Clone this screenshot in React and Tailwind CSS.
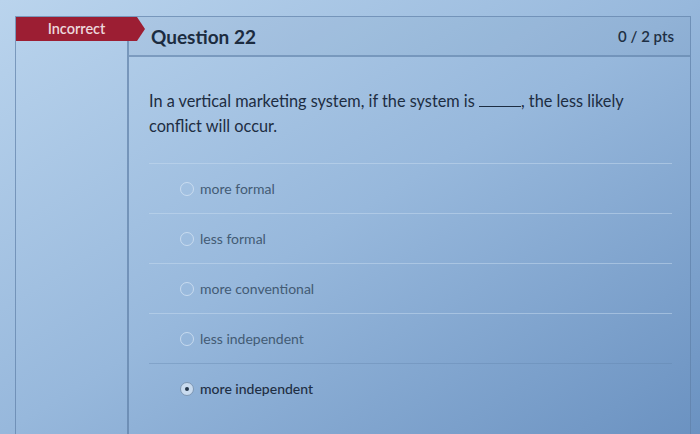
import React from 'react';

const options = [
  { label: 'more formal', selected: false },
  { label: 'less formal', selected: false },
  { label: 'more conventional', selected: false },
  { label: 'less independent', selected: false },
  { label: 'more independent', selected: true },
];

const Radio = ({ selected }) => (
  <span
    className={
      'flex h-[14px] w-[14px] shrink-0 items-center justify-center rounded-full border ' +
      (selected ? 'border-[#7e97b3] bg-[#c9dbef]' : 'border-[#d3e2f2]/80 bg-transparent')
    }
  >
    {selected && <span className="h-[4px] w-[4px] rounded-full bg-[#24364a]" />}
  </span>
);

const App = () => {
  return (
    <div
      className="h-[434px] w-[700px] overflow-hidden bg-gradient-to-br from-[#bad4ed] via-[#97b8dc] to-[#6b92c1] pl-[15px] pt-[16px]"
      style={{ fontFamily: 'Lato, "Open Sans", sans-serif' }}
    >
      <div className="flex h-[430px] w-[676px] border-l border-r border-t border-[#5f80a8]/70">
        {/* Left status column */}
        <div className="relative w-[113px] shrink-0 border-r-2 border-[#5f80a8]/70">
          <div className="relative z-10 flex h-[24px] w-[121px] items-center justify-center bg-[#9c1e33] text-[14.5px] font-semibold text-[#ecd7dc]">
            Incorrect
            <span className="absolute right-[-8px] top-0 h-0 w-0 border-b-[12px] border-l-[8px] border-t-[12px] border-b-transparent border-l-[#9c1e33] border-t-transparent" />
          </div>
        </div>

        {/* Question body */}
        <div className="flex flex-1 flex-col">
          <div className="flex h-[40px] items-center justify-between border-b-2 border-[#5f80a8]/60 bg-[#21456f]/5 pl-[22px] pr-[16px]">
            <h2 className="pt-[2px] text-[19px] font-bold text-[#1c2c40]">Question 22</h2>
            <span className="text-[15px] font-semibold text-[#1e2f44]">0 / 2 pts</span>
          </div>

          <div className="pl-[20px] pr-[18px]">
            <p className="mt-[31px] text-[16.3px] leading-[25px] text-[#1d2d42]">
              In a vertical marketing system, if the system is{' '}
              <span className="inline-block w-[42px] border-b border-[#1d2d42] align-baseline" />, the less likely
              <br />
              conflict will occur.
            </p>

            <div className="mt-[25px]">
              {options.map((o, i) => (
                <div
                  key={o.label}
                  className={
                    'flex h-[50px] items-center gap-[6px] pl-[31px] border-t ' +
                    (i < options.length - 1 ? 'border-[#c8dbef]/50' : 'border-[#5f80a8]/35')
                  }
                >
                  <Radio selected={o.selected} />
                  <span
                    className={
                      'text-[14px] ' + (o.selected ? 'font-medium text-[#1f2f44]' : 'text-[#435b74]')
                    }
                  >
                    {o.label}
                  </span>
                </div>
              ))}
            </div>
          </div>
        </div>
      </div>
    </div>
  );
};

export default App;
